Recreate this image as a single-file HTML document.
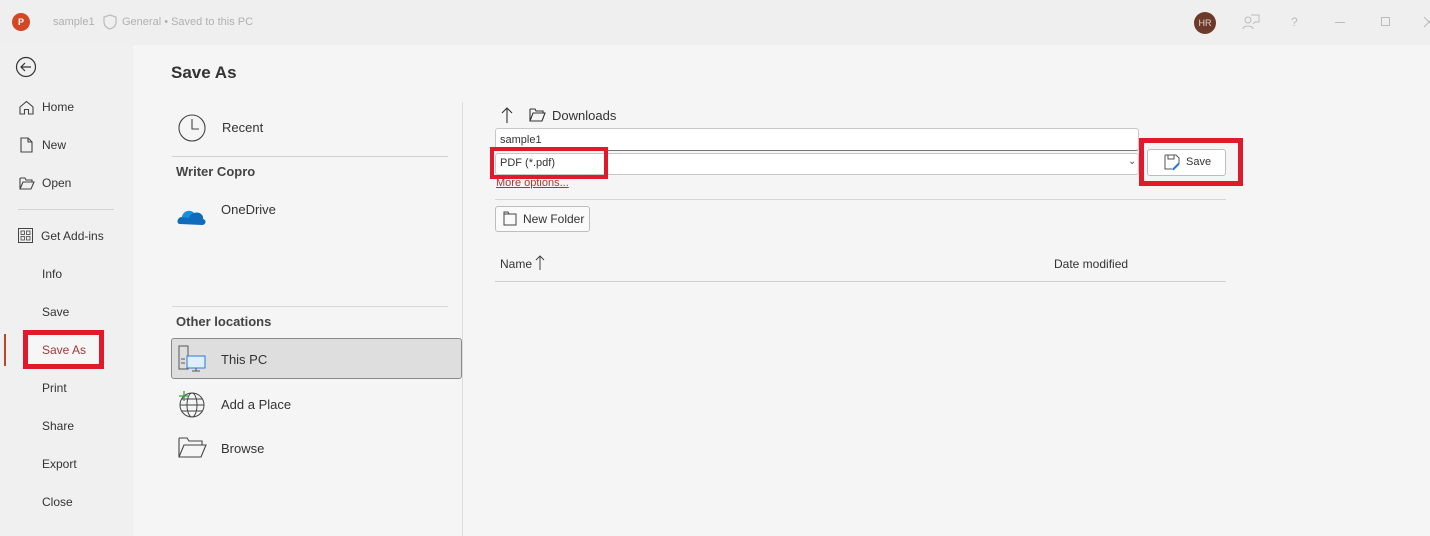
<!DOCTYPE html>
<html><head><meta charset="utf-8"><style>
*{margin:0;padding:0;box-sizing:border-box}
body{width:1430px;height:536px;overflow:hidden;background:#f5f5f5;font-family:"Liberation Sans",sans-serif;color:#262626;position:relative}
.a{position:absolute;white-space:nowrap}
.nav{font-size:12px;color:#333}
svg{position:absolute;overflow:visible}
</style></head><body>
<div class="a" style="left:0;top:0;width:1430px;height:45px;background:#efefef"></div>
<div class="a" style="left:0;top:45px;width:133px;height:491px;background:#f0f0f0"></div>
<div class="a" style="left:12px;top:13px;width:18px;height:18px;border-radius:50%;background:#d24726;color:#fff;font-size:9px;font-weight:bold;line-height:18px;text-align:center">P</div>
<div class="a" style="left:53px;top:16px;font-size:11px;color:#b0b0b0">sample1</div>
<svg style="left:103px;top:14px" width="14" height="16"><path d="M7 1 L13 3 V8 C13 12 10 14 7 15 C4 14 1 12 1 8 V3 Z" fill="none" stroke="#bbb" stroke-width="1.2"/></svg>
<div class="a" style="left:122px;top:16px;font-size:11px;color:#b0b0b0">General • Saved to this PC</div>
<div class="a" style="left:1194px;top:12px;width:22px;height:22px;border-radius:50%;background:#6b3a2a;color:#e8d0c8;font-size:9px;line-height:22px;text-align:center">HR</div>
<svg style="left:1242px;top:13px" width="18" height="18"><circle cx="6" cy="7" r="3" fill="none" stroke="#bbb"/><path d="M1 16 C1 12 11 12 11 16 M9 2 H17 V9 H13 L11 11" fill="none" stroke="#bbb"/></svg>
<div class="a" style="left:1291px;top:15px;font-size:12px;color:#bbb">?</div>
<div class="a" style="left:1335px;top:22px;width:10px;height:1px;background:#bbb"></div>
<div class="a" style="left:1381px;top:17px;width:9px;height:9px;border:1px solid #bbb"></div>
<svg style="left:1424px;top:17px" width="10" height="10"><path d="M0 0 L10 10 M10 0 L0 10" stroke="#bbb"/></svg>
<!-- left nav -->
<svg style="left:15px;top:56px" width="22" height="22"><circle cx="11" cy="11" r="9.5" fill="none" stroke="#333" stroke-width="1.2"/><path d="M16 11 H6 M10 7 L6 11 L10 15" fill="none" stroke="#333" stroke-width="1.2"/></svg>
<svg style="left:19px;top:100px" width="15" height="15"><path d="M1 7 L7.5 1.5 L14 7 V14 H9.5 V9.5 H5.5 V14 H1 Z" fill="none" stroke="#444" stroke-width="1.1"/></svg>
<div class="a nav" style="left:42px;top:100px">Home</div>
<svg style="left:20px;top:137px" width="13" height="16"><path d="M1 1 H8 L12 5 V15 H1 Z M8 1 V5 H12" fill="none" stroke="#444" stroke-width="1.1"/></svg>
<div class="a nav" style="left:42px;top:138px">New</div>
<svg style="left:19px;top:177px" width="16" height="13"><path d="M1 1 H6 L7 3 H13 V5 M1 1 V12 H12 L15 5 H4 L1 12" fill="none" stroke="#444" stroke-width="1.1"/></svg>
<div class="a nav" style="left:42px;top:176px">Open</div>
<div class="a" style="left:18px;top:209px;width:96px;height:1px;background:#d4d4d4"></div>
<svg style="left:18px;top:228px" width="15" height="15"><rect x="0.5" y="0.5" width="14" height="14" fill="none" stroke="#444"/><rect x="3" y="3" width="3.5" height="3.5" fill="none" stroke="#444" stroke-width=".8"/><rect x="8.5" y="3" width="3.5" height="3.5" fill="none" stroke="#444" stroke-width=".8"/><rect x="3" y="8.5" width="3.5" height="3.5" fill="none" stroke="#444" stroke-width=".8"/><rect x="8.5" y="8.5" width="3.5" height="3.5" fill="none" stroke="#444" stroke-width=".8"/></svg>
<div class="a nav" style="left:41px;top:229px">Get Add-ins</div>
<div class="a nav" style="left:42px;top:267px">Info</div>
<div class="a nav" style="left:42px;top:305px">Save</div>
<div class="a" style="left:4px;top:334px;width:2px;height:32px;background:#b7472a"></div>
<div class="a" style="left:23px;top:330px;width:81px;height:39px;border:5px solid #e01a2b;background:#f6f6f6"></div>
<div class="a nav" style="left:42px;top:343px;color:#a4373a">Save As</div>
<div class="a nav" style="left:42px;top:381px">Print</div>
<div class="a nav" style="left:42px;top:419px">Share</div>
<div class="a nav" style="left:42px;top:457px">Export</div>
<div class="a nav" style="left:42px;top:495px">Close</div>
<!-- middle -->
<div class="a" style="left:171px;top:63px;font-size:17px;font-weight:bold;color:#333">Save As</div>
<div class="a" style="left:462px;top:102px;width:1px;height:434px;background:#dcdcdc"></div>
<svg style="left:178px;top:114px" width="28" height="28"><circle cx="14" cy="14" r="13" fill="none" stroke="#444" stroke-width="1.1"/><path d="M14 5 V15 H21" fill="none" stroke="#444" stroke-width="1.1"/></svg>
<div class="a" style="left:222px;top:120px;font-size:13px;color:#333">Recent</div>
<div class="a" style="left:172px;top:156px;width:276px;height:1px;background:#d0d0d0"></div>
<div class="a" style="left:176px;top:164px;font-size:13px;font-weight:bold;color:#444">Writer Copro</div>
<svg style="left:177px;top:204px" width="30" height="22"><path d="M3 20 C-1 20 0 13 5 13 C6 7 13 5 17 9 C22 7 27 11 26 15 C30 16 29 21 25 21 Z" fill="#0f6cbd"/><path d="M5 13 C6 7 13 5 17 9 C14 10 12 12 12 14 C9 13 6 14 5 13Z" fill="#1490df"/></svg>
<div class="a" style="left:221px;top:202px;font-size:13px;color:#333">OneDrive</div>
<div class="a" style="left:172px;top:306px;width:276px;height:1px;background:#d8d8d8"></div>
<div class="a" style="left:176px;top:314px;font-size:13px;font-weight:bold;color:#444">Other locations</div>
<div class="a" style="left:171px;top:338px;width:291px;height:41px;background:#dedede;border:1px solid #8a8a8a;border-radius:3px"></div>
<svg style="left:178px;top:345px" width="30" height="28"><path d="M1 1 H10 V24 H1 Z M3 14 H7 M3 18 H7" fill="none" stroke="#555"/><rect x="9" y="11" width="18" height="12" fill="#dfefff" stroke="#2a7bd5"/><path d="M18 23 V26 M14 26 H22" stroke="#555"/></svg>
<div class="a" style="left:221px;top:352px;font-size:13px;color:#333">This PC</div>
<svg style="left:178px;top:390px" width="28" height="28"><circle cx="14" cy="15" r="12" fill="none" stroke="#444"/><ellipse cx="14" cy="15" rx="5" ry="12" fill="none" stroke="#444"/><path d="M2 15 H26 M4 9 H24 M4 21 H24" stroke="#444" fill="none"/><path d="M6 1 V11 M1 6 H11" stroke="#3a9b45" stroke-width="1.3"/></svg>
<div class="a" style="left:221px;top:397px;font-size:13px;color:#333">Add a Place</div>
<svg style="left:178px;top:437px" width="30" height="22"><path d="M1 1 H9 L11 4 H24 V8 M1 1 V20 H23 L28 8 H6 L1 20" fill="none" stroke="#444" stroke-width="1.1"/></svg>
<div class="a" style="left:221px;top:441px;font-size:13px;color:#333">Browse</div>
<!-- right -->
<svg style="left:500px;top:106px" width="14" height="18"><path d="M7 17 V2 M2 7 L7 2 L12 7" fill="none" stroke="#333" stroke-width="1.1"/></svg>
<svg style="left:529px;top:108px" width="18" height="14"><path d="M1 1 H6 L7 3 H14 V5 M1 1 V13 H13 L16 5 H4 L1 13" fill="none" stroke="#333" stroke-width="1.1"/></svg>
<div class="a" style="left:552px;top:108px;font-size:13px;color:#333">Downloads</div>
<div class="a" style="left:495px;top:128px;width:644px;height:23px;background:#fff;border:1px solid #c8c8c8;border-bottom:1px solid #777;border-radius:3px"></div>
<div class="a" style="left:500px;top:134px;font-size:11px;color:#333">sample1</div>
<div class="a" style="left:495px;top:153px;width:644px;height:22px;background:#fff;border:1px solid #c8c8c8;border-radius:3px"></div>
<div class="a" style="left:1128px;top:156px;font-size:10px;color:#555">⌄</div>
<div class="a" style="left:490px;top:147px;width:118px;height:32px;border:4px solid #e01a2b"></div>
<div class="a" style="left:500px;top:157px;font-size:11px;color:#333">PDF (*.pdf)</div>
<div class="a" style="left:496px;top:177px;font-size:11px;color:#a4373a;text-decoration:underline">More options...</div>
<div class="a" style="left:1139px;top:138px;width:104px;height:48px;border:5px solid #e01a2b"></div>
<div class="a" style="left:1147px;top:149px;width:79px;height:27px;background:#fff;border:1px solid #bdbdbd;border-radius:3px"></div>
<svg style="left:1164px;top:154px" width="16" height="16"><path d="M1 1 H12 L15 4 V10 M1 1 V15 H8 M4 1 V5 H10 V1" fill="none" stroke="#555"/><path d="M8 15 L14 9 L15.5 10.5 L9.5 16.5 Z" fill="#2a7bd5"/></svg>
<div class="a" style="left:1186px;top:156px;font-size:11px;color:#333">Save</div>
<div class="a" style="left:495px;top:199px;width:731px;height:1px;background:#d6d6d6"></div>
<div class="a" style="left:495px;top:206px;width:95px;height:26px;background:#fafafa;border:1px solid #bdbdbd;border-radius:3px"></div>
<svg style="left:503px;top:211px" width="14" height="15"><path d="M1 1 H5 L6 3 H13 V14 H1 Z M1 3 H6" fill="none" stroke="#444"/></svg>
<div class="a" style="left:523px;top:212px;font-size:12px;color:#333">New Folder</div>
<div class="a" style="left:500px;top:257px;font-size:12px;color:#333">Name</div>
<svg style="left:535px;top:255px" width="10" height="16"><path d="M5 15 V1 M1 5 L5 1 L9 5" fill="none" stroke="#444"/></svg>
<div class="a" style="left:1054px;top:257px;font-size:12px;color:#333">Date modified</div>
<div class="a" style="left:495px;top:281px;width:731px;height:1px;background:#d0d0d0"></div>
</body></html>
